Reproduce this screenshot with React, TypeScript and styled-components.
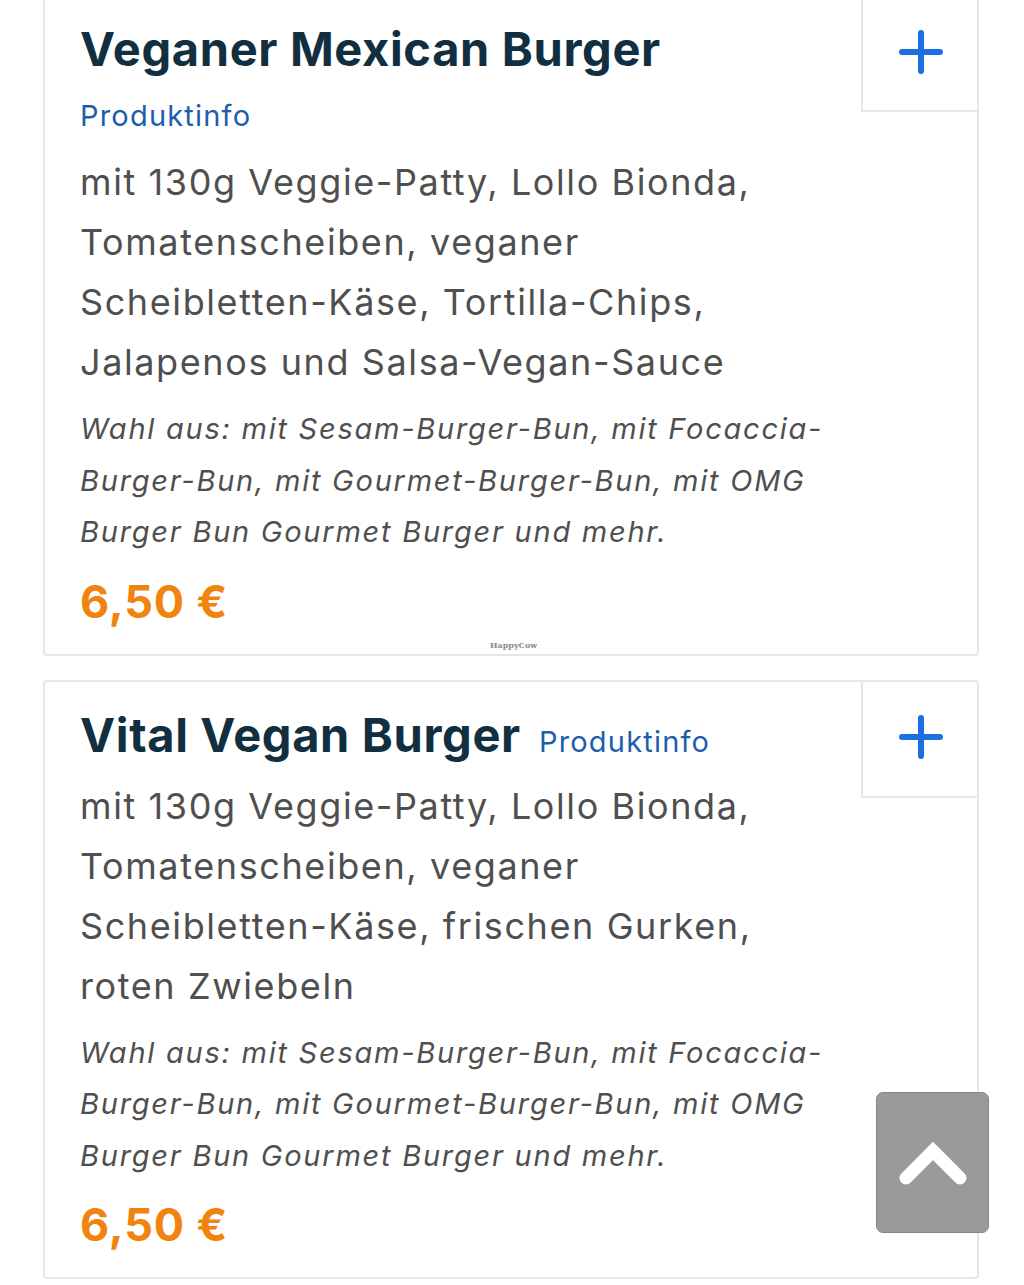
import * as React from 'react';
import styled, { createGlobalStyle } from 'styled-components';

const Global = createGlobalStyle`
  html, body {
    margin: 0;
    padding: 0;
    background: #fff;
    overflow: hidden;
  }
  body {
    font-family: Inter, "Noto Sans", sans-serif;
    -webkit-font-smoothing: antialiased;
  }
`

const Page = styled.div`
  margin-top: -6px;
  padding: 0 0 6px 43px;
  width: 936px;
  display: flex;
  flex-direction: column;
  gap: 24px;
`

// Product card
const Card = styled.div`
  position: relative;
  display: grid;
  grid-template-columns: 1fr 116px;
  border: 2px solid #e7e7e7;
  border-radius: 4px;
  background: #fff;
`

const Body = styled.div`
  padding: 20px 0 24px 35px;
`

const Head = styled.div<{ $inline?: boolean }>`
  display: flex;
  flex-direction: ${p => (p.$inline ? 'row' : 'column')};
  align-items: ${p => (p.$inline ? 'baseline' : 'flex-start')};
  gap: ${p => (p.$inline ? '18px' : '13px')};
  padding-bottom: ${p => (p.$inline ? '0' : '7px')};
`

const Title = styled.h2`
  margin: 0;
  font-size: 47px;
  line-height: 66px;
  font-weight: 700;
  color: #112f40;
  letter-spacing: 0.65px;
`

const InfoLink = styled.a`
  font-size: 29px;
  line-height: 42px;
  color: #1d5eab;
  letter-spacing: 1.2px;
  text-decoration: none;
  cursor: pointer;
`

const Description = styled.p`
  margin: 8px 0 0;
  max-width: 740px;
  font-size: 36px;
  line-height: 60px;
  color: #4f4f4f;
  letter-spacing: 1.6px;
`

const Options = styled.p`
  margin: 11px 0 0;
  max-width: 790px;
  font-size: 29px;
  line-height: 51.5px;
  font-style: italic;
  color: #4f4f4f;
  letter-spacing: 1.75px;
`

const Price = styled.div`
  margin-top: 16px;
  font-size: 45px;
  line-height: 56px;
  font-weight: 700;
  color: #f0840f;
  letter-spacing: 0.8px;
`

// Add button in the top right corner
const AddBox = styled.button`
  align-self: start;
  height: 116px;
  display: flex;
  align-items: center;
  justify-content: center;
  background: #fff;
  border: none;
  border-left: 2px solid #e7e7e7;
  border-bottom: 2px solid #e7e7e7;
  padding: 0 0 3px 1px;
  cursor: pointer;
`

const Watermark = styled.span`
  position: absolute;
  left: 445px;
  bottom: 4px;
  font-family: "DejaVu Serif", serif;
  font-size: 8px;
  font-weight: 700;
  color: #8a8a8a;
`

// Scroll-to-top button floating over the page
const ScrollTop = styled.button`
  position: absolute;
  left: 876px;
  top: 1092px;
  width: 113px;
  height: 141px;
  background: #9a9a9a;
  border: 1px solid #858585;
  border-radius: 7px;
  display: flex;
  align-items: center;
  justify-content: center;
  padding: 0;
`

const Plus = () => (
  <svg width="44" height="44" viewBox="0 0 44 44">
    <path d="M22 3v38M3 22h38" stroke="#1b6fe0" strokeWidth="6" strokeLinecap="round" />
  </svg>
)

const Chevron = () => (
  <svg width="70" height="46" viewBox="0 0 70 46">
    <path d="M8 38L35 11l27 27" stroke="#fff" strokeWidth="13" strokeLinecap="round" strokeLinejoin="miter" fill="none" />
  </svg>
)

type Product = {
  name: string
  inline?: boolean
  description: string
  options: string
  price: string
  mark?: boolean
}

const products: Product[] = [
  {
    name: 'Veganer Mexican Burger',
    description: 'mit 130g Veggie-Patty, Lollo Bionda, Tomatenscheiben, veganer Scheibletten-Käse, Tortilla-Chips, Jalapenos und Salsa-Vegan-Sauce',
    options: 'Wahl aus: mit Sesam-Burger-Bun, mit Focaccia-Burger-Bun, mit Gourmet-Burger-Bun, mit OMG Burger Bun Gourmet Burger und mehr.',
    price: '6,50 €',
    mark: true,
  },
  {
    name: 'Vital Vegan Burger',
    inline: true,
    description: 'mit 130g Veggie-Patty, Lollo Bionda, Tomatenscheiben, veganer Scheibletten-Käse, frischen Gurken, roten Zwiebeln',
    options: 'Wahl aus: mit Sesam-Burger-Bun, mit Focaccia-Burger-Bun, mit Gourmet-Burger-Bun, mit OMG Burger Bun Gourmet Burger und mehr.',
    price: '6,50 €',
  },
]

export default function App() {
  return (
    <>
      <Global />
      <Page>
        {products.map(p => (
          <Card key={p.name}>
            <Body>
              <Head $inline={p.inline}>
                <Title>{p.name}</Title>
                <InfoLink>Produktinfo</InfoLink>
              </Head>
              <Description>{p.description}</Description>
              <Options>{p.options}</Options>
              <Price>{p.price}</Price>
            </Body>
            <AddBox aria-label="Hinzufügen"><Plus /></AddBox>
            {p.mark && <Watermark>HappyCow</Watermark>}
          </Card>
        ))}
      </Page>
      <ScrollTop aria-label="Nach oben"><Chevron /></ScrollTop>
    </>
  )
}
